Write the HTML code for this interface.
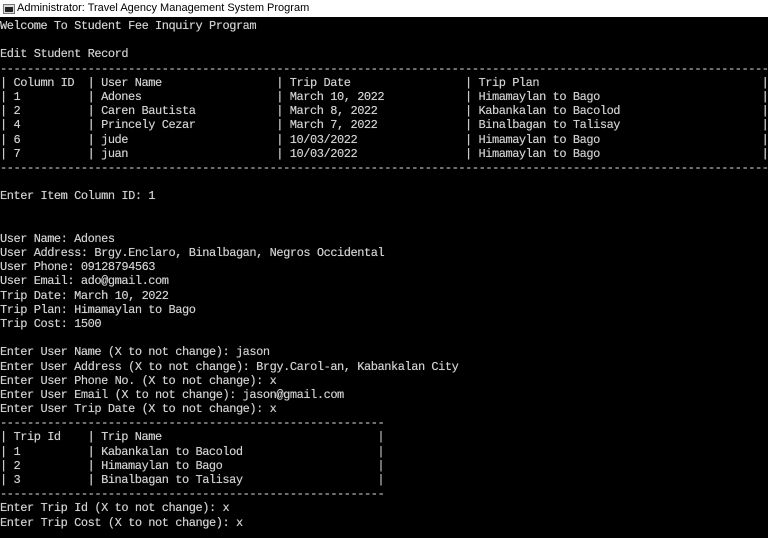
<!DOCTYPE html>
<html><head><meta charset="utf-8"><style>
html,body{margin:0;padding:0;width:768px;height:538px;overflow:hidden;background:#000}
.tb{position:absolute;left:0;top:0;width:768px;height:17px;background:#fff;font-family:"Liberation Sans",sans-serif;font-size:11px;color:#000;line-height:17px}
.tb .ic{position:absolute;left:3px;top:4px;width:10px;height:8px;border:1px solid #777;background:#ddd}
.tb .ic:after{content:"";position:absolute;left:1px;top:2px;width:8px;height:5px;background:#222}
.tb span{position:absolute;left:17px;top:0}
.con{position:absolute;left:0;top:19px;font-family:"Liberation Mono",monospace;font-size:12px;letter-spacing:-0.46px;line-height:14.2px;color:#d0d0d0;text-shadow:0 0 0.4px #ccc}
.l{position:relative;height:14.2px;width:768px;white-space:pre}
.l span{position:absolute;top:0}
.a{left:87.6px}.b{left:276.3px}.c{left:465px}.d{left:761.6px}.e{left:377.4px}
</style></head><body>
<div class="tb"><div class="ic"></div><span>Administrator:  Travel Agency Management System Program</span></div>
<div class="con">
<div class="l">Welcome To Student Fee Inquiry Program</div>
<div class="l"></div>
<div class="l">Edit Student Record</div>
<div class="l">------------------------------------------------------------------------------------------------------------------</div>
<div class="l"><span style="left:0">| Column ID</span><span class="a">| User Name</span><span class="b">| Trip Date</span><span class="c">| Trip Plan</span><span class="d">|</span></div>
<div class="l"><span style="left:0">| 1</span><span class="a">| Adones</span><span class="b">| March 10, 2022</span><span class="c">| Himamaylan to Bago</span><span class="d">|</span></div>
<div class="l"><span style="left:0">| 2</span><span class="a">| Caren Bautista</span><span class="b">| March 8, 2022</span><span class="c">| Kabankalan to Bacolod</span><span class="d">|</span></div>
<div class="l"><span style="left:0">| 4</span><span class="a">| Princely Cezar</span><span class="b">| March 7, 2022</span><span class="c">| Binalbagan to Talisay</span><span class="d">|</span></div>
<div class="l"><span style="left:0">| 6</span><span class="a">| jude</span><span class="b">| 10/03/2022</span><span class="c">| Himamaylan to Bago</span><span class="d">|</span></div>
<div class="l"><span style="left:0">| 7</span><span class="a">| juan</span><span class="b">| 10/03/2022</span><span class="c">| Himamaylan to Bago</span><span class="d">|</span></div>
<div class="l">------------------------------------------------------------------------------------------------------------------</div>
<div class="l"></div>
<div class="l">Enter Item Column ID: 1</div>
<div class="l"></div>
<div class="l"></div>
<div class="l">User Name: Adones</div>
<div class="l">User Address: Brgy.Enclaro, Binalbagan, Negros Occidental</div>
<div class="l">User Phone: 09128794563</div>
<div class="l">User Email: ado@gmail.com</div>
<div class="l">Trip Date: March 10, 2022</div>
<div class="l">Trip Plan: Himamaylan to Bago</div>
<div class="l">Trip Cost: 1500</div>
<div class="l"></div>
<div class="l">Enter User Name (X to not change): jason</div>
<div class="l">Enter User Address (X to not change): Brgy.Carol-an, Kabankalan City</div>
<div class="l">Enter User Phone No. (X to not change): x</div>
<div class="l">Enter User Email (X to not change): jason@gmail.com</div>
<div class="l">Enter User Trip Date (X to not change): x</div>
<div class="l">---------------------------------------------------------</div>
<div class="l"><span style="left:0">| Trip Id</span><span class="a">| Trip Name</span><span class="e">|</span></div>
<div class="l"><span style="left:0">| 1</span><span class="a">| Kabankalan to Bacolod</span><span class="e">|</span></div>
<div class="l"><span style="left:0">| 2</span><span class="a">| Himamaylan to Bago</span><span class="e">|</span></div>
<div class="l"><span style="left:0">| 3</span><span class="a">| Binalbagan to Talisay</span><span class="e">|</span></div>
<div class="l">---------------------------------------------------------</div>
<div class="l">Enter Trip Id (X to not change): x</div>
<div class="l">Enter Trip Cost (X to not change): x</div>
</div>
</body></html>
